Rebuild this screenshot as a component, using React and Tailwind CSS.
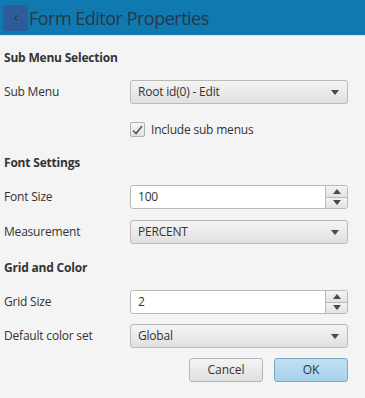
import { ChevronLeft } from 'lucide-react'

const font = { fontFamily: '"Open Sans", "Noto Sans", sans-serif' }

function Arrow({ up }) {
  return (
    <svg width="8" height="5" viewBox="0 0 8 5" className="block">
      <path d={up ? 'M0 5 L4 0 L8 5 Z' : 'M0 0 L8 0 L4 5 Z'} fill="#4a4a4a" />
    </svg>
  )
}

function Row({ label, children, mt }) {
  return (
    <div className={`flex items-center ${mt}`}>
      <div className="w-[126px] text-[12px] tracking-[-0.2px] text-[#333]">{label}</div>
      <div className="w-[218px]">{children}</div>
    </div>
  )
}

function Select({ value }) {
  return (
    <div className="h-[24px] flex items-center justify-between rounded-[3px] border border-[#b9b9b9] bg-gradient-to-b from-[#f4f4f4] to-[#e0e0e0] pl-[7px] pr-[8px] text-[12px] tracking-[-0.2px] text-[#333]">
      <span>{value}</span>
      <Arrow />
    </div>
  )
}

function Spinner({ value }) {
  return (
    <div className="h-[24px] flex rounded-[3px] border border-[#b9b9b9] bg-white overflow-hidden">
      <div className="flex-1 flex items-center pl-[7px] text-[12px] tracking-[-0.2px] text-[#333]">{value}</div>
      <div className="w-[22px] flex flex-col border-l border-[#b9b9b9]">
        <div className="flex-1 flex items-center justify-center bg-gradient-to-b from-[#f4f4f4] to-[#e2e2e2] border-b border-[#b9b9b9]">
          <Arrow up />
        </div>
        <div className="flex-1 flex items-center justify-center bg-gradient-to-b from-[#f4f4f4] to-[#e2e2e2]">
          <Arrow />
        </div>
      </div>
    </div>
  )
}

function Header({ children, mt }) {
  return <div className={`h-[18px] leading-[18px] text-[12px] tracking-[-0.2px] font-bold text-[#333] ${mt}`}>{children}</div>
}

export default function App() {
  return (
    <div className="w-[365px] h-[398px] bg-[#f4f4f4] overflow-hidden" style={font}>
      {/* title bar */}
      <div className="h-[36px] bg-[#0f79b0] border-b border-[#d6e4ec] flex items-center pl-[3px]">
        <div className="w-[25px] h-[26px] rounded-[3px] bg-[#2e5c98] flex items-center justify-center">
          <ChevronLeft size={10} strokeWidth={2} color="#222" />
        </div>
        <div className="ml-[1px] text-[18px] tracking-[-0.5px] text-[#273845] leading-none">Form Editor Properties</div>
      </div>

      <div className="pl-[4px] flex flex-col">
        <Header mt="mt-[13px]">Sub Menu Selection</Header>
        <Row label="Sub Menu" mt="mt-[13px]">
          <Select value="Root id(0) - Edit" />
        </Row>
        <div className="mt-[18px] ml-[126px] h-[15px] flex items-center">
          <div className="w-[15px] h-[15px] rounded-[2px] border border-[#b0b0b0] bg-gradient-to-b from-[#f6f6f6] to-[#e2e2e2] flex items-center justify-center">
            <svg width="11" height="10" viewBox="0 0 11 10">
              <path d="M1 5.5 L4 8.5 L10 1" fill="none" stroke="#555" strokeWidth="1.6" />
            </svg>
          </div>
          <span className="ml-[6px] text-[12px] tracking-[-0.2px] text-[#333]">Include sub menus</span>
        </div>

        <Header mt="mt-[17px]">Font Settings</Header>
        <Row label="Font Size" mt="mt-[13px]">
          <Spinner value="100" />
        </Row>
        <Row label="Measurement" mt="mt-[11px]">
          <Select value="PERCENT" />
        </Row>

        <Header mt="mt-[15px]">Grid and Color</Header>
        <Row label="Grid Size" mt="mt-[13px]">
          <Spinner value="2" />
        </Row>
        <Row label="Default color set" mt="mt-[10px]">
          <Select value="Global" />
        </Row>

        <div className="mt-[10px] flex justify-end gap-[11px] pr-[17px]">
          <button className="w-[74px] h-[24px] rounded-[3px] border border-[#b5b5b5] bg-gradient-to-b from-[#f4f4f4] to-[#e0e0e0] text-[12px] text-[#333]">
            Cancel
          </button>
          <button className="w-[74px] h-[24px] rounded-[3px] border border-[#7fa8bf] bg-gradient-to-b from-[#bfe0f2] to-[#a6d2ea] text-[12px] text-[#333]">
            OK
          </button>
        </div>
      </div>
    </div>
  )
}
